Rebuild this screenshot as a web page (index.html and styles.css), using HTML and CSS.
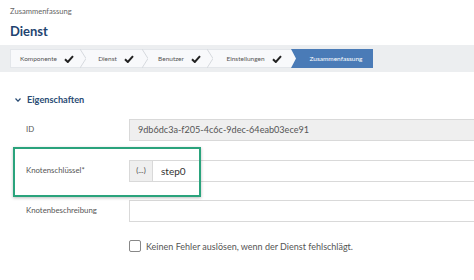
FILE: index.html
```html
<!DOCTYPE html>
<html lang="de">
<head>
  <meta charset="UTF-8">
  <title>Dienst</title>
  <link rel="stylesheet" href="styles.css">
</head>
<body>

  <div class="crumb">Zusammenfassung</div>
  <h1>Dienst</h1>

  <div class="wizard">
    <div class="steps">
      <div class="step s1">Komponente <svg class="check" viewBox="0 0 10 8"><path d="M1 4.2 L3.8 7 L9 1.2"/></svg></div>
      <svg class="chev" viewBox="0 0 6 19"><polyline points="0,0 6,9.5 0,19"/></svg>
      <div class="step s2">Dienst <svg class="check" viewBox="0 0 10 8"><path d="M1 4.2 L3.8 7 L9 1.2"/></svg></div>
      <svg class="chev" viewBox="0 0 6 19"><polyline points="0,0 6,9.5 0,19"/></svg>
      <div class="step s3">Benutzer <svg class="check" viewBox="0 0 10 8"><path d="M1 4.2 L3.8 7 L9 1.2"/></svg></div>
      <svg class="chev" viewBox="0 0 6 19"><polyline points="0,0 6,9.5 0,19"/></svg>
      <div class="step s4">Einstellungen <svg class="check" viewBox="0 0 10 8"><path d="M1 4.2 L3.8 7 L9 1.2"/></svg></div>
      <div class="step active">Zusammenfassung</div>
    </div>
  </div>

  <div class="section">
    <svg class="toggle" viewBox="0 0 6 4"><polyline points="0.5,0.5 3,3.2 5.5,0.5"/></svg>
    Eigenschaften
  </div>

  <div class="row">
    <label>ID</label>
    <div class="field readonly">9db6dc3a-f205-4c6c-9dec-64eab03ece91</div>
  </div>

  <div class="row key">
    <label>Knotenschlüssel*</label>
    <div class="group">
      <span class="addon">(...)</span>
      <div class="field">step0</div>
    </div>
    <span class="highlight"></span>
  </div>

  <div class="row">
    <label>Knotenbeschreibung</label>
    <div class="field"></div>
  </div>

  <div class="check-row">
    <span class="box"></span>
    Keinen Fehler auslösen, wenn der Dienst fehlschlägt.
  </div>

</body>
</html>
```

FILE: styles.css
```css
body {
  margin: 0;
  font-family: Lato, "Open Sans", sans-serif;
  background: #fff;
  color: #555;
  width: 474px;
  height: 280px;
  overflow: hidden;
}

.crumb {
  font-size: 7.6px;
  line-height: 10px;
  color: #666;
  padding: 6px 0 0 10px;
}

h1 {
  margin: 0;
  padding: 6px 0 0 10px;
  font-size: 13px;
  line-height: 18px;
  font-weight: 700;
  color: #1f4470;
}

.wizard {
  margin-top: 5px;
  background: #eceef0;
  padding: 4px 0 4px 10px;
}

.steps {
  display: flex;
  width: 363px;
  height: 19px;
  background: #f8f9fb;
  box-shadow: 0 0 0 1px #e3e6ea inset;
}

.step {
  display: flex;
  align-items: center;
  justify-content: center;
  gap: 7px;
  padding-left: 4px;
  font-size: 6.5px;
  color: #555;
  box-sizing: border-box;
}

.s1 { width: 70px; }
.s2 { width: 56px; }
.s3 { width: 59px; }
.s4 { width: 78px; }

.check {
  width: 10px;
  height: 8px;
  fill: none;
  stroke: #222;
  stroke-width: 2;
}

.chev {
  width: 6px;
  height: 19px;
  fill: none;
  stroke: #d6dade;
  stroke-width: 1;
}

.step.active {
  width: 82px;
  padding-left: 8px;
  background: #4a7bb7;
  color: #fff;
  clip-path: polygon(0 0, 100% 0, 100% 100%, 0 100%, 5px 50%);
}

.section {
  display: flex;
  align-items: center;
  gap: 6px;
  padding: 21px 0 0 15px;
  font-size: 9.2px;
  line-height: 14px;
  font-weight: 700;
  color: #2a4c74;
}

.toggle {
  width: 6px;
  height: 4px;
  fill: none;
  stroke: #2a4c74;
  stroke-width: 1.2;
}

.row {
  display: flex;
  align-items: center;
  padding-left: 26px;
  margin-top: 18px;
  margin-right: -4px;
}

.section + .row {
  margin-top: 12px;
}

.row.key {
  margin-top: 19px;
  position: relative;
}

.row label {
  width: 103px;
  font-size: 7.8px;
  color: #555;
  margin-bottom: 3px;
}

.field {
  flex: 1;
  height: 22px;
  box-sizing: border-box;
  border: 1px solid #d9d9d9;
  background: #fff;
  padding-left: 8px;
  font-size: 10px;
  line-height: 20px;
  color: #333;
}

.field.readonly {
  background: #efefef;
  color: #555;
  font-size: 9.1px;
}

.group {
  flex: 1;
  display: flex;
}

.addon {
  width: 23px;
  height: 22px;
  box-sizing: border-box;
  border: 1px solid #d9d9d9;
  border-right: none;
  background: #efefef;
  font-size: 7.5px;
  line-height: 20px;
  text-align: center;
  color: #444;
}

.highlight {
  position: absolute;
  left: 13px;
  top: -13px;
  width: 188px;
  height: 50px;
  box-sizing: border-box;
  border: 2px solid #2aa37c;
  box-shadow: 0 1px 3px rgba(0,0,0,0.25);
}

.check-row {
  display: flex;
  align-items: center;
  gap: 5px;
  padding-left: 129px;
  margin-top: 18px;
  font-size: 9px;
  color: #555;
}

.box {
  width: 12px;
  height: 12px;
  box-sizing: border-box;
  border: 1px solid #888;
  border-radius: 2px;
}
```
